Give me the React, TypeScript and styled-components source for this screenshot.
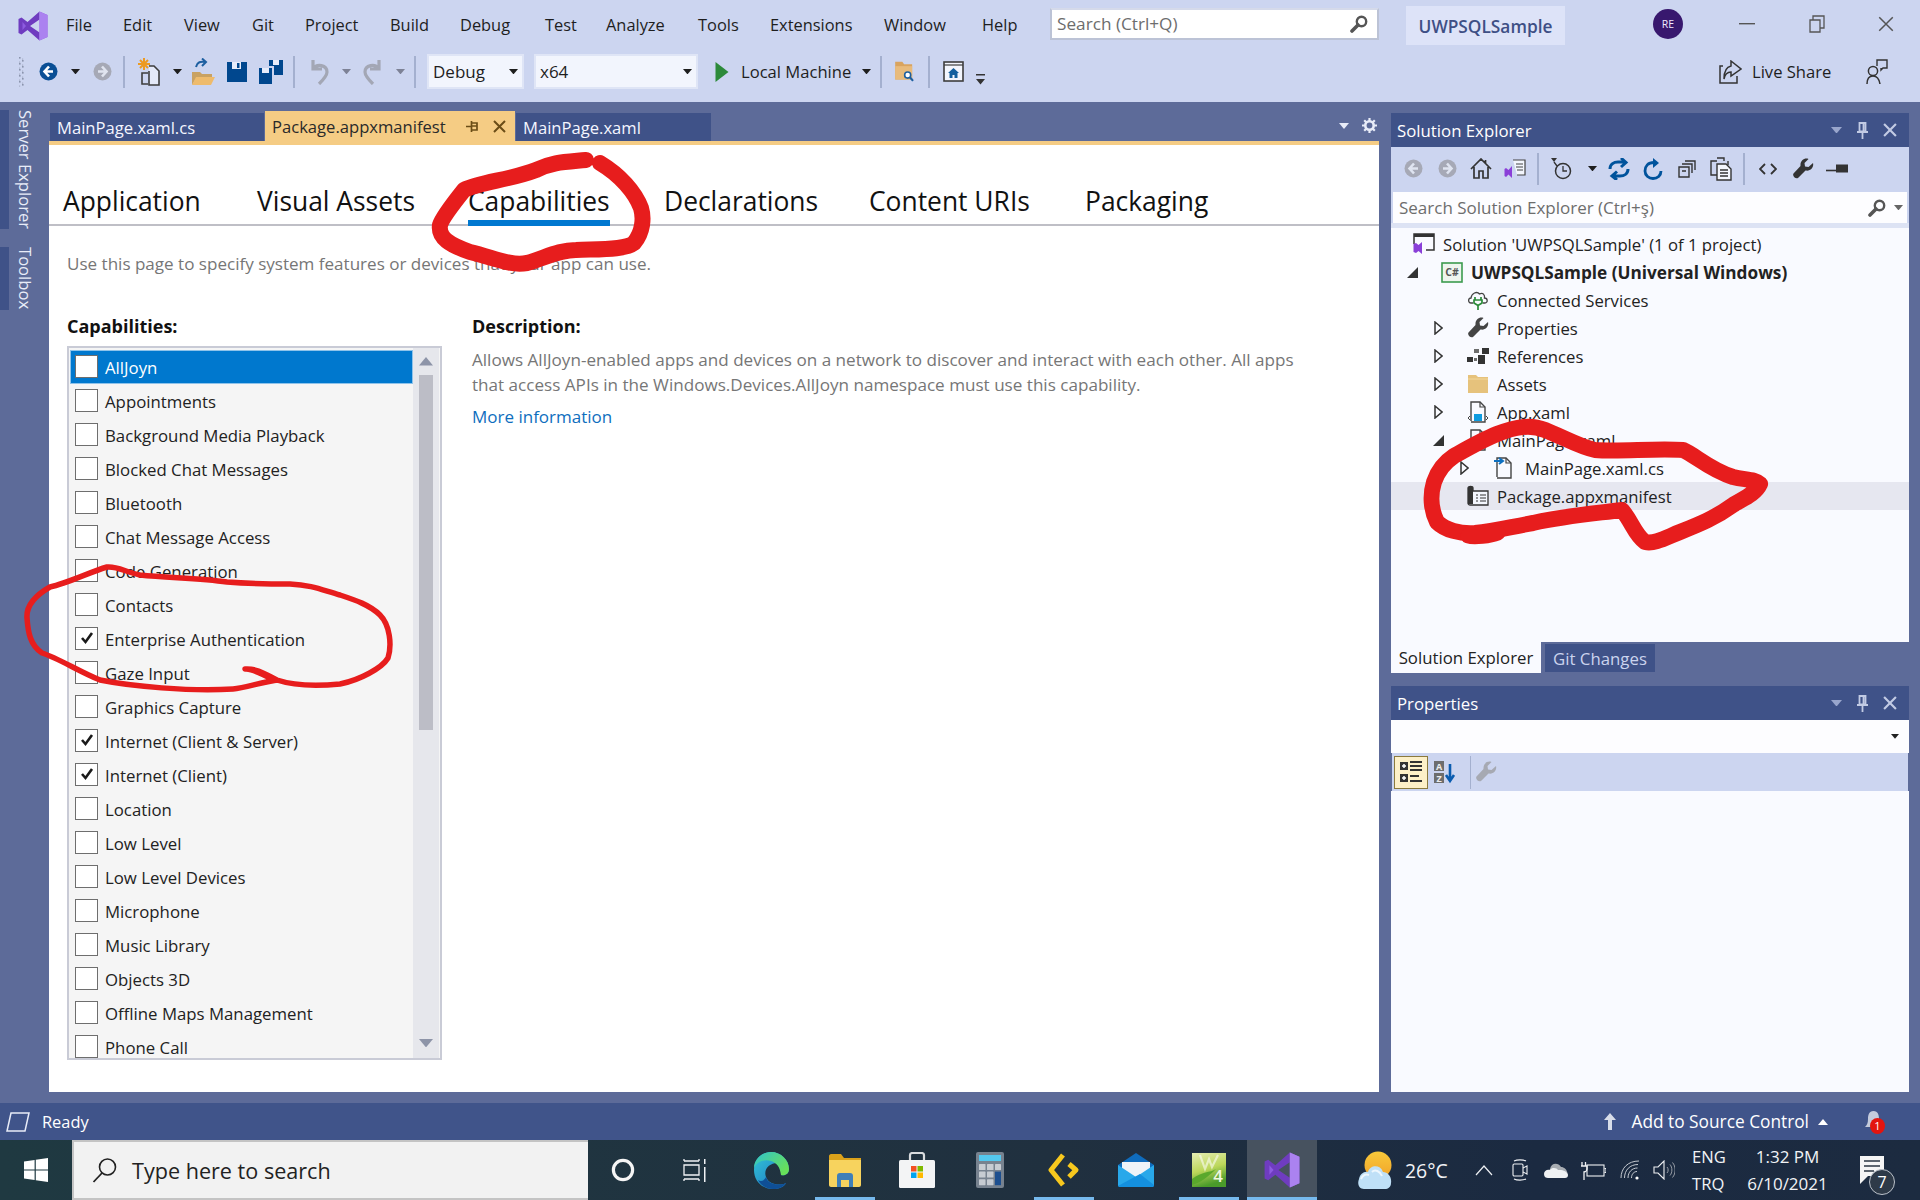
import React from 'react';
import styled, { createGlobalStyle } from 'styled-components';

const Global = createGlobalStyle`
  html, body { margin: 0; padding: 0; width: 1920px; height: 1200px; overflow: hidden; background: #5d6b99; }
  body { font-family: "Open Sans", "Noto Sans", sans-serif; }
  * { box-sizing: border-box; }
  svg { display: block; flex: none; }
`;

const Page = styled.div`
  position: relative; width: 1920px; height: 1200px; display: flex; flex-direction: column; overflow: hidden;
`;
const Chrome = styled.header`
  height: 102px; background: #ccd5f0; color: #1e1e1e; display: flex; flex-direction: column;
`;
const MenuRow = styled.div`
  height: 51px; display: flex; align-items: center; padding-left: 18px;
`;
const LogoSlot = styled.div`
  width: 48px; height: 51px; display: flex; align-items: center;
`;
const MenuItem = styled.div<{ $w: number }>`
  width: ${p => p.$w}px; font-size: 16.4px; white-space: nowrap; padding-bottom: 3px;
`;
const QuickSearch = styled.div`
  width: 329px; height: 32px; background: #fff; border: 2px solid #bcc3d6; border-top-color: #d5daea; display: flex;
  align-items: center; justify-content: space-between; padding: 0 9px 0 5px; color: #6d6d6d; font-size: 17.2px; margin-top: -4px;
`;
const ProjectBadge = styled.div`
  width: 159px; height: 39px; margin-left: 27px; margin-top: -1px; background: #dde3f8; color: #3e4f85; font-size: 17.3px; font-weight: 600;
  display: flex; align-items: center; justify-content: center; padding-top: 3px;
`;
const Avatar = styled.div`
  width: 30px; height: 30px; border-radius: 50%; background: #38186e; color: #f0eaff; font-size: 10.5px; margin-left: 88px; margin-top: -4px;
  display: flex; align-items: center; justify-content: center;
`;
const WinButton = styled.div<{ $w: number; $ml?: number }>`
  width: ${p => p.$w}px; margin-left: ${p => p.$ml ?? 0}px; display: flex; justify-content: center; margin-top: -3px;
`;
const ToolRow = styled.div`
  height: 41px; display: flex; align-items: center; padding-left: 7px;
`;
const Tool = styled.div<{ $w: number; $ml?: number }>`
  width: ${p => p.$w}px; margin-left: ${p => p.$ml ?? 0}px; height: 36px; display: flex; align-items: center; justify-content: center; flex: none;
`;
const OverflowTool = styled(Tool)`
  padding-top: 16px;
`;
const Sep = styled.div`
  width: 2px; height: 32px; background: #a4b0cf;
`;
const Combo = styled.div<{ $w: number; $ml: number }>`
  width: ${p => p.$w}px; margin-left: ${p => p.$ml}px; height: 35px; background: #f2f5fd; border: 2px solid #dfe5f6; display: flex; align-items: center;
  justify-content: space-between; padding: 0 4px 0 4px; font-size: 17px; color: #1e1e1e;
`;
const ToolLabel = styled.div<{ $w: number; $ml: number }>`
  width: ${p => p.$w}px; margin-left: ${p => p.$ml}px; font-size: 16.6px; white-space: nowrap; flex: none;
`;
const ToolEnd = styled.div`
  margin-left: auto; display: flex; align-items: center; padding-right: 32px;
`;

const Main = styled.main`
  flex: 1; display: flex; background: #5d6b99; padding-bottom: 11px; min-height: 0;
`;
const SideStrip = styled.aside`
  width: 49px; flex: none; padding-top: 8px; display: flex; flex-direction: column; gap: 18px;
`;
const VTab = styled.div<{ $h: number }>`
  height: ${p => p.$h}px; width: 41px; border-left: 9px solid #3f5288; color: #e8ecf8; writing-mode: vertical-rl; font-size: 16.6px; line-height: 32px; white-space: nowrap;
`;
const DocColumn = styled.section`
  width: 1330px; flex: none; display: flex; flex-direction: column;
`;
const DocTabs = styled.div`
  height: 39px; padding-top: 9px; display: flex; position: relative; align-items: flex-end; padding-left: 1px;
`;
const DocTab = styled.div<{ $w: number; $active?: boolean; $ml?: number }>`
  width: ${p => p.$w}px; margin-left: ${p => p.$ml ?? 0}px; height: ${p => (p.$active ? 30 : 28)}px; background: ${p => (p.$active ? '#f5cc84' : '#3f5288')};
  color: ${p => (p.$active ? '#2a2a2a' : '#f4f6ff')}; font-size: 16.6px; display: flex; align-items: center; padding-left: 7px; white-space: nowrap;
`;
const DocTabIcons = styled.div`
  display: flex; align-items: center; margin-left: 20px; gap: 14px;
`;
const DocTabTools = styled.div`
  position: absolute; right: 2px; top: 16px; display: flex; align-items: center; gap: 13px;
`;
const DocBody = styled.div`
  flex: 1; background: #fff; border-top: 4px solid #f5cc84; display: flex; flex-direction: column; min-height: 0;
`;
const PageTabs = styled.nav`
  height: 81px; flex: none; border-bottom: 2px solid #bfbfc6; display: flex; align-items: flex-end; padding-left: 14px;
`;
const PageTabSlot = styled.div<{ $w: number }>`
  width: ${p => p.$w}px; flex: none;
`;
const PageTabLabel = styled.div<{ $active?: boolean }>`
  display: inline-block; font-size: 26.4px; line-height: 34px; padding-top: 4px; padding-bottom: 2px; color: #111; white-space: nowrap;
  border-bottom: 6px solid ${p => (p.$active ? '#0078d0' : 'transparent')}; margin-bottom: -2px;
`;
const Intro = styled.p`
  margin: 26px 0 0 18px; font-size: 17.06px; line-height: 24px; color: #767676; white-space: nowrap;
`;
const Columns = styled.div`
  margin: 38px 0 0 18px; display: flex; gap: 30px; flex: 1; min-height: 0;
`;
const ListColumn = styled.div`
  width: 375px; flex: none;
`;
const Heading = styled.h3`
  margin: 0; font-size: 18px; line-height: 24px; font-weight: 700; color: #111;
`;
const ListBox = styled.div`
  margin-top: 8px; height: 714px; border: 2px solid #c9cbd6; background: #f5f5f5; display: flex; overflow: hidden;
`;
const Rows = styled.div`
  flex: 1; padding-top: 2px; overflow: hidden; min-width: 0;
`;
const Row = styled.div<{ $sel?: boolean }>`
  height: 34px; margin-left: 1px; display: flex; align-items: center; padding-left: 5px; font-size: 16.8px; white-space: nowrap;
  color: ${p => (p.$sel ? '#fff' : '#222')}; background: ${p => (p.$sel ? '#0078ce' : 'transparent')};
  box-shadow: ${p => (p.$sel ? 'inset 0 0 0 1px #8fc3ea' : 'none')};
`;
const Check = styled.div`
  width: 23px; height: 23px; flex: none; margin-right: 7px; margin-top: -2px; background: #fff;
  border: 1.5px solid #6e6e6e; display: flex; align-items: center; justify-content: center;
`;
const Scrollbar = styled.div`
  width: 26px; flex: none; margin-right: 1px; background: #e6e7ec; display: flex; flex-direction: column; align-items: center;
`;
const ScrollArrow = styled.div<{ $h: number }>`
  height: ${p => p.$h}px; flex: none; display: flex; align-items: center; justify-content: center;
`;
const ScrollThumb = styled.div`
  width: 14px; height: 355px; flex: none; background: #bcbdc6; margin-bottom: auto;
`;
const DescColumn = styled.div`
  width: 845px; flex: none;
`;
const DescText = styled.p`
  margin: 9px 0 0; font-size: 17.1px; line-height: 25px; color: #767676;
`;
const MoreLink = styled.a`
  display: block; margin-top: 8px; font-size: 17px; line-height: 24px; color: #0e6ebe;
`;

const RightColumn = styled.section`
  width: 518px; flex: none; margin-left: 12px; padding-top: 11px; display: flex; flex-direction: column;
`;
const PanelTitle = styled.div`
  height: 34px; flex: none; background: #3f5288; color: #fff; font-size: 16.8px; display: flex; align-items: center; padding: 0 12px 0 6px;
`;
const TitleText = styled.span`
  flex: 1;
`;
const TitleIcons = styled.div`
  display: flex; align-items: center; gap: 15px;
`;
const ExplorerBar = styled.div`
  height: 43px; flex: none; background: #ccd5f0; display: flex; align-items: center; padding-left: 5px;
`;
const ExplorerSearchWrap = styled.div`
  height: 38px; flex: none; background: #ccd5f0; padding: 2px 2px 5px; border-bottom: 5px solid #dde3f4;
`;
const ExplorerSearch = styled.div`
  height: 31px; background: #fdfdff; color: #6d6d6d; font-size: 17px; display: flex; align-items: center; justify-content: space-between; padding: 0 4px 0 6px;
`;
const SearchEnd = styled.div`
  display: flex; align-items: center; gap: 8px;
`;
const Tree = styled.div`
  height: 414px; flex: none; background: #f9faff; padding-top: 2px; color: #222; overflow: hidden;
`;
const TreeRow = styled.div<{ $pad: number; $hl?: boolean; $bold?: boolean }>`
  height: 28px; display: flex; align-items: center; padding-left: ${p => p.$pad}px; font-size: ${p => (p.$bold ? 17.2 : 16.7)}px; white-space: nowrap;
  background: ${p => (p.$hl ? '#e6e7f0' : 'transparent')}; font-weight: ${p => (p.$bold ? 700 : 400)};
`;
const TreeCaret = styled.div`
  width: 20px; flex: none; display: flex; justify-content: center;
`;
const TreeIcon = styled.div<{ $ml: number; $mr?: number }>`
  width: 26px; margin-left: ${p => p.$ml}px; margin-right: ${p => p.$mr ?? 6}px; flex: none; display: flex; justify-content: center;
`;
const BottomTabs = styled.div`
  height: 44px; flex: none; display: flex; align-items: flex-start; gap: 4px;
`;
const BottomTab = styled.div<{ $active?: boolean }>`
  height: ${p => (p.$active ? 31 : 28)}px; width: ${p => (p.$active ? 150 : 110)}px; margin-top: ${p => (p.$active ? 0 : 2)}px;
  background: ${p => (p.$active ? '#f9faff' : '#3f5288')}; color: ${p => (p.$active ? '#222' : '#cbd4ee')}; font-size: 16.8px;
  display: flex; align-items: center; justify-content: center;
`;
const PropCombo = styled.div`
  height: 33px; flex: none; background: #fdfdff; display: flex; align-items: center; justify-content: flex-end; padding-right: 10px;
`;
const PropBar = styled.div`
  height: 38px; flex: none; margin: 0 1px; background: #ccd5f0; display: flex; align-items: center; padding-left: 2px;
`;
const PropToggle = styled.div`
  width: 34px; height: 33px; background: #fdf0c8; border: 1.5px solid #8b7a3e; display: flex; align-items: center; justify-content: center;
`;
const PropSep = styled.div`
  width: 1px; height: 33px; background: #a4b0cf; margin-left: 8px;
`;
const PropBody = styled.div`
  flex: 1; background: #f9faff;
`;

const StatusBar = styled.footer`
  height: 37px; flex: none; background: #40548a; color: #fff; font-size: 16.4px; display: flex; align-items: center; padding-left: 6px;
`;
const StatusText = styled.span<{ $ml: number; $size?: number }>`
  margin-left: ${p => p.$ml}px; font-size: ${p => p.$size ?? 16.4}px;
`;
const StatusEnd = styled.div`
  margin-left: auto; display: flex; align-items: center; padding-right: 37px;
`;
const BellWrap = styled.div`
  position: relative; margin-left: 27px;
`;
const BellBadge = styled.div`
  position: absolute; left: 6px; top: 8px; width: 15px; height: 16px; border-radius: 50%; background: #e3140f; color: #fff; font-size: 11px;
  display: flex; align-items: center; justify-content: center;
`;

const Taskbar = styled.footer`
  height: 60px; flex: none; background: linear-gradient(90deg, #1f3941 0%, #20303f 55%, #1b2a41 80%, #1c2b40 100%); display: flex; color: #fff;
`;
const TaskSlot = styled.div<{ $w: number; $ml?: number; $active?: boolean; $run?: boolean }>`
  position: relative; width: ${p => p.$w}px; margin-left: ${p => p.$ml ?? 0}px; flex: none; display: flex; align-items: center; justify-content: center;
  background: ${p => (p.$active ? '#47525f' : 'transparent')};
  &::after {
    content: ''; position: absolute; bottom: 0; height: 3px; left: 50%; transform: translateX(-50%);
    width: ${p => (p.$active ? '100%' : '60px')}; background: ${p => (p.$run ? '#76b9ed' : 'transparent')};
  }
`;
const TaskSearch = styled.div`
  width: 516px; flex: none; background: #f2f2f2; border: 2px solid #c4c4c4; border-right: 0; color: #222; font-size: 21.6px;
  display: flex; align-items: center; gap: 14px; padding-left: 18px;
`;
const TrayText = styled.div<{ $w: number; $ml: number }>`
  width: ${p => p.$w}px; margin-left: ${p => p.$ml}px; flex: none; font-size: 19.4px; display: flex; align-items: center; color: #f1f3f6;
`;
const LangStack = styled.div`
  width: 50px; margin-left: 10px; flex: none; display: flex; flex-direction: column; justify-content: center; gap: 3px; font-size: 16.6px; line-height: 24px; color: #f1f3f6;
`;
const ClockStack = styled.div`
  width: 81px; margin-left: 5px; flex: none; display: flex; flex-direction: column; justify-content: center; align-items: center; gap: 3px; font-size: 17px; line-height: 24px; color: #f1f3f6;
`;
const NotifyBadge = styled.div`
  position: absolute; left: 41px; top: 29px; width: 26px; height: 26px; border-radius: 50%; background: #2e3a48; border: 1.5px solid #bcc2ca; color: #fff;
  font-size: 16px; display: flex; align-items: center; justify-content: center;
`;
const Annotations = styled.svg`
  position: absolute; left: 0; top: 0; width: 1920px; height: 1200px; pointer-events: none;
`;

/* ---------- icons ---------- */
const VsLogo = ({ size = 30 }: { size?: number }) => (
  <svg width={size} height={size} viewBox="0 0 30 30">
    <path d="M21.5 0.5 L21.5 8.5 L12 15 L21.5 21.5 L21.5 29.5 L9.5 19 L3.5 23.5 L0.5 22 L0.5 8 L3.5 6.5 L9.5 11 Z" fill="#6f3cc0" />
    <path d="M21.5 0.5 L29.5 4 L29.5 26 L21.5 29.5 Z M4.5 11 L4.5 19 L8 15 Z" fill="#8e5be0" fillRule="evenodd" />
    <path d="M21.5 0.5 L29.5 4 L29.5 26 L21.5 29.5 Z" fill="#ab82f0" />
  </svg>
);
const Caret = ({ c = '#1e1e1e', w = 9, dir = 'down' }: { c?: string; w?: number; dir?: 'down' | 'up' }) => (
  <svg width={w} height={w * 0.6} viewBox="0 0 10 6">
    <path d={dir === 'down' ? 'M0 0 H10 L5 6 Z' : 'M0 6 H10 L5 0 Z'} fill={c} />
  </svg>
);
const Magnifier = ({ c = '#555', s = 18 }: { c?: string; s?: number }) => (
  <svg width={s} height={s} viewBox="0 0 18 18">
    <circle cx="11.5" cy="6.5" r="4.7" fill="none" stroke={c} strokeWidth="2.4" />
    <path d="M8 10 L2 16" stroke={c} strokeWidth="3.6" strokeLinecap="round" />
  </svg>
);
const Grip = () => (
  <svg width="8" height="30" viewBox="0 0 8 30">
    {Array.from({ length: 10 }).map((_, i) => (
      <g key={i} fill="#8a94ad">
        <rect x={i % 2 ? 4 : 1} y={i * 3} width="1.6" height="1.6" />
        <rect x={i % 2 ? 1 : 4} y={i * 3 + 1.5} width="1.2" height="1.2" fill="#a7b0c7" />
      </g>
    ))}
  </svg>
);
const NavCircle = ({ back, c, a }: { back?: boolean; c: string; a: string }) => (
  <svg width="19" height="19" viewBox="0 0 19 19">
    <circle cx="9.5" cy="9.5" r="9" fill={c} />
    <path d={back ? 'M10 4.5 L5.5 9.5 L10 14.5 M6 9.5 H14' : 'M9 4.5 L13.5 9.5 L9 14.5 M13 9.5 H5'} fill="none" stroke={a} strokeWidth="2.6" />
  </svg>
);
const NewProject = () => (
  <svg width="26" height="30" viewBox="0 0 26 30">
    <path d="M12 9 H17 L22 14 V28 H12 V14" fill="#e4e9f8" stroke="#3d3d3d" strokeWidth="1.6" />
    <path d="M11 16 H5 V27 H11" fill="none" stroke="#3d3d3d" strokeWidth="1.6" />
    <path d="M7 1 V13 M1 7 H13 M3 3 L11 11 M11 3 L3 11" stroke="#ec9a22" strokeWidth="2" />
  </svg>
);
const OpenFolder = () => (
  <svg width="26" height="28" viewBox="0 0 26 28">
    <path d="M2 14 H10 L12 16 H22 V19 H7 L2 27 Z" fill="#c9a262" />
    <path d="M6 19 H25 L21 27 H2 Z" fill="#eebb6c" />
    <path d="M6 9 C7 4 11 3 15 4 M12 0.5 L16 4 L12 8" fill="none" stroke="#1d5fa0" strokeWidth="2" />
  </svg>
);
const Floppy = ({ s = 22 }: { s?: number }) => (
  <svg width={s} height={s} viewBox="0 0 22 22">
    <path d="M1 1 H21 V21 H1 Z" fill="#00478e" />
    <rect x="6" y="1" width="9" height="7" fill="#e6ecfa" />
    <rect x="11" y="2" width="2.5" height="5" fill="#00478e" />
  </svg>
);
const SaveAll = () => (
  <svg width="24" height="25" viewBox="0 0 24 25">
    <path d="M0 9 H13 V25 H0 Z" fill="#00478e" />
    <rect x="3" y="9" width="7" height="5" fill="#e6ecfa" />
    <path d="M10 1 H24 V16 H15 V7 H10 Z" fill="#00478e" />
    <rect x="14" y="1" width="6" height="5" fill="#e6ecfa" />
  </svg>
);
const Undo = ({ flip }: { flip?: boolean }) => (
  <svg width="22" height="26" viewBox="0 0 22 26">
    <g transform={flip ? 'translate(22,0) scale(-1,1)' : undefined}>
      <path d="M5 1 V10 H14 M5 10 C9 4 19 6 19 13 C19 17 15 21 11 25" fill="none" stroke="#a3a7b5" strokeWidth="3.2" />
    </g>
  </svg>
);
const Play = () => (
  <svg width="14" height="20" viewBox="0 0 14 20"><path d="M0.5 0 L13.5 10 L0.5 20 Z" fill="#2c8a3a" /></svg>
);
const FolderSearch = () => (
  <svg width="22" height="25" viewBox="0 0 24 28">
    <path d="M1 3 H9 L11 6 H20 V23 H1 Z" fill="#d9a45f" />
    <path d="M1 8 H20 V23 H1 Z" fill="#e8bb7c" />
    <circle cx="15" cy="18" r="3.4" fill="#fff" stroke="#1d5fa0" strokeWidth="1.8" />
    <path d="M17.5 20.5 L21 24.5" stroke="#1d5fa0" strokeWidth="2.4" />
  </svg>
);
const HomeWin = () => (
  <svg width="21" height="21" viewBox="0 0 21 21">
    <rect x="1" y="1" width="19" height="19" fill="#f3f6fd" stroke="#3d3d3d" strokeWidth="1.6" />
    <path d="M1 4 H20" stroke="#3d3d3d" strokeWidth="1.2" />
    <path d="M5 12 L10.5 7 L16 12 H14.5 V17 H11.5 V14 H9.5 V17 H6.5 V12 Z" fill="#14609e" />
  </svg>
);
const Overflow = () => (
  <svg width="9" height="11" viewBox="0 0 9 11"><path d="M0 0 H9 V1.5 H0 Z M0 5 H9 L4.5 10.5 Z" fill="#333" /></svg>
);
const LiveShare = () => (
  <svg width="23" height="24" viewBox="0 0 23 24">
    <path d="M4 6 H1 V23 H18 V16" fill="none" stroke="#333" strokeWidth="1.5" />
    <path d="M12 1 L22 9 L12 16 V12 C9 12 6 14 5 19 C5 12 7 7 12 6 Z" fill="none" stroke="#333" strokeWidth="1.5" />
  </svg>
);
const Feedback = () => (
  <svg width="22" height="26" viewBox="0 0 22 26">
    <circle cx="7" cy="12" r="4.6" fill="none" stroke="#333" strokeWidth="1.5" />
    <path d="M1 25 C1 19 4 17 7 17 C10 17 13 19 14 25" fill="none" stroke="#333" strokeWidth="1.5" />
    <path d="M11 7 V1 H21 V9 H17 L15 11 V9" fill="none" stroke="#333" strokeWidth="1.4" />
  </svg>
);
const Pin = ({ c }: { c: string }) => (
  <svg width="11" height="17" viewBox="0 0 11 17">
    <path d="M2.5 1 H8.5 V9.5 H2.5 Z M0 10 H11 M5.5 10 V17 M6.5 1 V9" fill="none" stroke={c} strokeWidth="1.8" />
  </svg>
);
const SmallPin = () => (
  <svg width="13" height="11" viewBox="0 0 13 11"><path d="M0 5.5 H5 M5.5 0 V11 M5.5 2 H11 V9 H5.5 M6 5 H11" fill="none" stroke="#6b4d16" strokeWidth="1.7" /></svg>
);
const XMark = ({ c, s = 13, w = 1.8 }: { c: string; s?: number; w?: number }) => (
  <svg width={s} height={s} viewBox="0 0 13 13"><path d="M1 1 L12 12 M12 1 L1 12" stroke={c} strokeWidth={w} /></svg>
);
const Gear = () => (
  <svg width="15" height="15" viewBox="0 0 15 15">
    <circle cx="7.5" cy="7.5" r="4.2" fill="none" stroke="#e8ecf8" strokeWidth="2.6" />
    <path d="M7.5 0 V3 M7.5 12 V15 M0 7.5 H3 M12 7.5 H15 M2.2 2.2 L4.2 4.2 M10.8 10.8 L12.8 12.8 M2.2 12.8 L4.2 10.8 M10.8 4.2 L12.8 2.2" stroke="#e8ecf8" strokeWidth="2.2" />
  </svg>
);
const TreeOpen = () => (
  <svg width="11" height="11" viewBox="0 0 11 11"><path d="M11 0 V11 H0 Z" fill="#333" /></svg>
);
const TreeClosed = () => (
  <svg width="9" height="14" viewBox="0 0 9 14"><path d="M1 1 L8 7 L1 13 Z" fill="none" stroke="#333" strokeWidth="1.5" /></svg>
);
const Wrench = ({ c, s = 22 }: { c: string; s?: number }) => (
  <svg width={s} height={s} viewBox="0 0 22 22">
    <path d="M21 5 L16.5 9 L13 8.5 L12.5 5 L16.5 1 C12.5 -0.5 8 2.5 8.5 8 L1.5 15.5 C0 17.5 3.5 21.5 6 20 L13.5 12.5 C19 13.5 22 9 21 5 Z" fill={c} />
  </svg>
);
const HomeIcon = () => (
  <svg width="22" height="21" viewBox="0 0 22 21">
    <path d="M1 11 L11 1 L21 11 M4 9 V20 H9 V13 H13 V20 H18 V9 M15.5 2 V5" fill="none" stroke="#333" strokeWidth="1.7" />
  </svg>
);
const VsDoc = () => (
  <svg width="22" height="20" viewBox="0 0 22 20">
    <path d="M9 1 H21 V16 H13" fill="#f3f6fd" stroke="#444" strokeWidth="1.2" />
    <path d="M12 5 H19 M12 8 H19 M13 11 H19" stroke="#444" strokeWidth="1.2" />
    <path d="M8 7 V19 L4.5 15.5 L2 18 L0.5 17 V10 L2 9 L4.5 11 Z" fill="#8a3fd8" />
  </svg>
);
const Clock = () => (
  <svg width="24" height="22" viewBox="0 0 24 22">
    <path d="M0 0 H6 L3 4 Z" fill="#333" />
    <circle cx="12" cy="13" r="7.5" fill="none" stroke="#333" strokeWidth="1.5" />
    <path d="M12 8 V13 H16 M3 4 L6 8" fill="none" stroke="#333" strokeWidth="1.3" />
  </svg>
);
const Sync = () => (
  <svg width="22" height="22" viewBox="0 0 22 22">
    <path d="M2 11 C2 6 6 4 10 4 H16 M13 0 L18 4.5 L13 9 M20 11 C20 16 16 18 12 18 H6 M9 13.5 L4 18 L9 22" fill="none" stroke="#00539c" strokeWidth="3" />
  </svg>
);
const Refresh = () => (
  <svg width="20" height="22" viewBox="0 0 20 22">
    <path d="M11 4.5 C5 4.5 2 8 2 13 C2 17.5 6 20.5 10 20.5 C14.5 20.5 18 17.5 18 13" fill="none" stroke="#00539c" strokeWidth="2.8" />
    <path d="M10 0 L16 5 L10 10 Z" fill="#00539c" />
  </svg>
);
const Collapse = () => (
  <svg width="18" height="18" viewBox="0 0 18 18">
    <path d="M1 7 H11 V17 H1 Z M4 11 H8 M4 4 H14 V13 M7 1 H17 V10" fill="none" stroke="#333" strokeWidth="1.4" />
  </svg>
);
const ClipDoc = () => (
  <svg width="22" height="24" viewBox="0 0 22 24">
    <path d="M7 4 H1 V18 H7 M7 1 H14 L14 4 M18 4 V8" fill="none" stroke="#333" strokeWidth="1.4" />
    <path d="M7 7 H16 L21 12 V23 H7 Z M10 13 H18 M10 16 H18 M10 19 H18" fill="#f3f6fd" stroke="#333" strokeWidth="1.4" />
  </svg>
);
const CodeBr = () => (
  <svg width="18" height="12" viewBox="0 0 18 12"><path d="M6 1 L1 6 L6 11 M12 1 L17 6 L12 11" fill="none" stroke="#333" strokeWidth="1.8" /></svg>
);
const DashPin = () => (
  <svg width="22" height="9" viewBox="0 0 22 9"><path d="M0 6.5 H10" stroke="#333" strokeWidth="1.6" /><rect x="10" y="0.5" width="12" height="8" fill="#333" /></svg>
);
const SolutionIcon = () => (
  <svg width="22" height="22" viewBox="0 0 22 22">
    <path d="M1 11 V1 H21 V17 H13" fill="none" stroke="#333" strokeWidth="1.5" />
    <path d="M1 1 H21 V4 H1 Z" fill="#333" />
    <path d="M9 9 V21 L5.5 18 L3 20 L0.5 19 V11 L3 10 L5.5 12 Z" fill="#8a3fd8" />
  </svg>
);
const CsProject = () => (
  <svg width="22" height="21" viewBox="0 0 22 21">
    <rect x="1" y="1" width="20" height="19" fill="#eef5ee" stroke="#3d9b4f" strokeWidth="1.6" />
    <text x="11" y="14" fontSize="10.5" fontWeight="700" textAnchor="middle" fontFamily="Open Sans" fill="#555">C#</text>
  </svg>
);
const CloudPlug = () => (
  <svg width="22" height="20" viewBox="0 0 22 20">
    <path d="M6 13 H4 C1 13 0.7 8 4 8 C4.5 3 10 1 12.5 4 C16 2 18 5 17.5 8 C21 8 21 13 18 13 H16" fill="none" stroke="#444" strokeWidth="1.3" />
    <path d="M8 7 V10 M14 7 V10 M7 10 H15 V13 L11 15.5 L7 13 Z M11 15 V20" fill="none" stroke="#2c8a3a" strokeWidth="1.7" />
  </svg>
);
const RefsIcon = () => (
  <svg width="22" height="17" viewBox="0 0 22 17">
    <g fill="#333"><rect x="0" y="9" width="6" height="5" /><rect x="11" y="7" width="7" height="9" /><rect x="15" y="0" width="7" height="6" /></g>
    <g fill="#6c6c6c"><rect x="7" y="1" width="5" height="4" /><rect x="7" y="10" width="3" height="3" /></g>
  </svg>
);
const TreeFolder = () => (
  <svg width="20" height="18" viewBox="0 0 20 18"><path d="M0 0 H8 L10 2 H20 V18 H0 Z" fill="#e6c27c" /><path d="M0 4 H20" stroke="#f3d79b" strokeWidth="1" /></svg>
);
const FileOutline = ({ children }: { children?: React.ReactNode }) => (
  <svg width="20" height="22" viewBox="0 0 20 22">
    <path d="M3 20 V1 H12 L17 6 V21 H3" fill="#f9faff" stroke="#444" strokeWidth="1.4" />
    <path d="M12 1 V6 H17" fill="none" stroke="#444" strokeWidth="1.2" />
    {children}
  </svg>
);
const ManifestIcon = () => (
  <svg width="22" height="22" viewBox="0 0 22 22">
    <path d="M1 18 V3 C1 1 6 1 6 3 V6 H21 V20 H3 C1 20 1 18 1 18 Z" fill="#f3f6fd" stroke="#333" strokeWidth="1.3" />
    <path d="M1 18 V3 C1 1 6 1 6 3 V19 H1 Z" fill="#333" />
    <path d="M9 10 H11 M13 10 H19 M9 13 H11 M13 13 H19 M9 16 H11 M13 16 H19" stroke="#333" strokeWidth="1" />
  </svg>
);
const CheckMark = () => (
  <svg width="14" height="14" viewBox="0 0 14 14"><path d="M2 7 L5.5 11 L12 2" fill="none" stroke="#1a1a1a" strokeWidth="2.6" /></svg>
);
const CategorizedIcon = () => (
  <svg width="24" height="24" viewBox="0 0 24 24">
    <g fill="#333">
      <rect x="1" y="2" width="8" height="8" /><rect x="1" y="14" width="8" height="8" />
      <rect x="11" y="1" width="12" height="2" /><rect x="11" y="5" width="12" height="2" /><rect x="11" y="9" width="12" height="2" />
      <rect x="11" y="15" width="9" height="2" /><rect x="11" y="20" width="12" height="2" />
    </g>
    <path d="M3 6 H7 M5 4 V8 M3 18 H7 M5 16 V20" stroke="#fff" strokeWidth="1.5" />
  </svg>
);
const AzIcon = () => (
  <svg width="24" height="24" viewBox="0 0 24 24">
    <rect x="1" y="1" width="10" height="10" fill="#6d6d6d" />
    <rect x="1" y="13" width="10" height="10" fill="#6d6d6d" />
    <text x="6" y="9.5" fontSize="9" fontWeight="700" textAnchor="middle" fontFamily="Open Sans" fill="#eee">A</text>
    <text x="6" y="21.5" fontSize="9" fontWeight="700" textAnchor="middle" fontFamily="Open Sans" fill="#eee">Z</text>
    <path d="M17 4 V20 M13 15 L17 21 L21 15" fill="none" stroke="#0a5cb0" strokeWidth="2.6" />
  </svg>
);
const ReadyIcon = () => (
  <svg width="24" height="20" viewBox="0 0 24 20"><path d="M5 1 H23 L19 19 H1 Z" fill="none" stroke="#e8ecf8" strokeWidth="1.5" /></svg>
);
const UpArrow = () => (
  <svg width="12" height="17" viewBox="0 0 12 17"><path d="M6 0 L12 7 H8 V17 H4 V7 H0 Z" fill="#d8dde9" /></svg>
);
const Bell = () => (
  <svg width="19" height="24" viewBox="0 0 19 24">
    <path d="M9.5 1 C5 1 4 5 4 9 C4 13 3 15 1 17 H18 C16 15 15 13 15 9 C15 5 14 1 9.5 1 Z M7 19 H12 L9.5 22 Z" fill="#c4cbdc" />
  </svg>
);
const WinLogo = () => (
  <svg width="24" height="24" viewBox="0 0 24 24">
    <path d="M0 3.4 L10.6 2 V11.4 H0 Z M11.8 1.8 L24 0 V11.4 H11.8 Z M0 12.6 H10.6 V22 L0 20.6 Z M11.8 12.6 H24 V24 L11.8 22.2 Z" fill="#fff" />
  </svg>
);
const TaskMagnifier = () => (
  <svg width="26" height="26" viewBox="0 0 26 26">
    <circle cx="15.5" cy="10" r="8" fill="none" stroke="#222" strokeWidth="1.6" />
    <path d="M10 16 L1.5 25" stroke="#222" strokeWidth="1.8" />
  </svg>
);
const Cortana = () => (
  <svg width="24" height="24" viewBox="0 0 24 24"><circle cx="12" cy="12" r="9.6" fill="none" stroke="#f5f5f5" strokeWidth="3.2" /></svg>
);
const TaskView = () => (
  <svg width="24" height="24" viewBox="0 0 24 24">
    <g fill="none" stroke="#f0f2f5" strokeWidth="1.3">
      <path d="M1 7 H16 V17 H1 Z M1 3 H16 M1 1 V3 M16 1 V3 M1 21 H16 M1 21 V23 M16 21 V23" />
    </g>
    <g fill="#f0f2f5"><rect x="21" y="1" width="1.5" height="5" /><rect x="21" y="9" width="1.5" height="15" /></g>
  </svg>
);
const Edge = () => (
  <svg width="36" height="37" viewBox="0 0 36 37">
    <defs>
      <linearGradient id="edgeA" x1="0" y1="0" x2="1" y2="1"><stop offset="0" stopColor="#33c6d6" /><stop offset="1" stopColor="#1b6fc2" /></linearGradient>
      <linearGradient id="edgeB" x1="0" y1="0" x2="1" y2="0.6"><stop offset="0" stopColor="#2fc3d0" /><stop offset="1" stopColor="#68e05a" /></linearGradient>
    </defs>
    <path d="M18 0 C9 0 1 7 1 18 C1 29 9 37 20 37 C26 37 31 35 33 31 C27 34 16 33 13 25 C10 17 17 11 24 11 C28 11 31 14 31 18 C31 20 29 22 28 23 C32 24 36 22 36 17 C36 8 28 0 18 0 Z" fill="url(#edgeA)" />
    <path d="M18 0 C9 0 1 7 1 16 C4 9 12 7 18 9 C24 11 27 15 28 23 C32 24 36 22 36 17 C36 8 28 0 18 0 Z" fill="url(#edgeB)" />
    <path d="M13 25 C15 33 27 34 33 31 C30 35 26 37 20 37 C14 37 8 34 5 28 C8 30 11 29 13 25 Z" fill="#0f4f96" />
  </svg>
);
const TaskFolder = () => (
  <svg width="32" height="33" viewBox="0 0 32 33">
    <path d="M0 2 C0 1 1 0 2 0 H12 L15 4 H32 V10 H0 Z" fill="#dba21b" />
    <path d="M0 6 H32 V31 C32 32 31 33 30 33 H2 C1 33 0 32 0 31 Z" fill="#f7d35e" />
    <path d="M8 33 V22 C8 20 9 19 11 19 H21 C23 19 24 20 24 22 V33 H20 V26 H12 V33 Z" fill="#3f7fb8" />
  </svg>
);
const TaskStore = () => (
  <svg width="36" height="36" viewBox="0 0 36 36">
    <path d="M11 10 V3 C11 1.5 12 1 13.5 1 H22.5 C24 1 25 1.5 25 3 V10" fill="none" stroke="#d9dcdf" strokeWidth="2.2" />
    <rect x="0" y="8" width="36" height="28" rx="1.5" fill="#f3f4f5" />
    <rect x="12" y="14" width="5.5" height="5.5" fill="#f25022" /><rect x="18.5" y="14" width="5.5" height="5.5" fill="#7fba00" />
    <rect x="12" y="20.5" width="5.5" height="5.5" fill="#00a4ef" /><rect x="18.5" y="20.5" width="5.5" height="5.5" fill="#ffb900" />
  </svg>
);
const Calc = () => (
  <svg width="28" height="36" viewBox="0 0 28 36">
    <rect width="28" height="36" rx="2" fill="#77828f" />
    <rect x="3" y="3" width="22" height="6" fill="#54c8ef" />
    {[0, 1, 2].map(r => [0, 1].map(c => <rect key={`${r}${c}`} x={3 + c * 8} y={12 + r * 7.6} width="6.5" height="6" rx="0.6" fill="#c7ccd2" />))}
    <rect x="19" y="12" width="6" height="6" rx="0.6" fill="#c7ccd2" />
    <rect x="19" y="19.6" width="6" height="13.6" fill="#1d4f8f" />
  </svg>
);
const CodeYellow = () => (
  <svg width="32" height="36" viewBox="0 0 32 36">
    <path d="M15 3 L3 18 L15 33" fill="none" stroke="#f7c81e" strokeWidth="5" strokeLinejoin="round" />
    <path d="M21 12 L28 18 L21 25" fill="none" stroke="#f7c81e" strokeWidth="5" strokeLinejoin="round" />
  </svg>
);
const MailIcon = () => (
  <svg width="36" height="34" viewBox="0 0 36 34">
    <path d="M18 0 L36 12 V32 C36 33 35 34 34 34 H2 C1 34 0 33 0 32 V12 Z" fill="#0f6cbd" />
    <path d="M4 9 H32 V17 L18 25 L4 17 Z" fill="#eef3f8" />
    <path d="M0 12 L18 24 L36 12 V32 C36 33 35 34 34 34 H2 C1 34 0 33 0 32 Z" fill="#28a8ea" />
    <path d="M0 33 L22 21 L36 32 C36 33 35 34 34 34 H2 Z" fill="#1490df" />
  </svg>
);
const GreenApp = () => (
  <svg width="34" height="34" viewBox="0 0 34 34">
    <defs><linearGradient id="gr" x1="0" y1="0" x2="0.3" y2="1"><stop offset="0" stopColor="#e6edb4" /><stop offset="0.55" stopColor="#bcd75a" /><stop offset="1" stopColor="#4a9b2a" /></linearGradient></defs>
    <rect width="34" height="34" fill="url(#gr)" />
    <path d="M8 2 L13 16 L17 6 L20 14 L26 2" fill="none" stroke="#fff" strokeOpacity="0.55" strokeWidth="2.2" />
    <path d="M0 26 C10 18 18 20 24 16 C16 24 8 30 0 32 Z" fill="#5aa82c" />
    <text x="26" y="29" fontSize="17" fontWeight="600" textAnchor="middle" fontFamily="Open Sans" fill="#f2f7e2">4</text>
  </svg>
);
const WeatherIcon = () => (
  <svg width="34" height="38" viewBox="0 0 34 38">
    <defs><linearGradient id="sun" x1="0" y1="0" x2="0" y2="1"><stop offset="0" stopColor="#f8c93a" /><stop offset="1" stopColor="#f1a22a" /></linearGradient></defs>
    <circle cx="20" cy="14" r="13.5" fill="url(#sun)" />
    <path d="M6 38 C1 38 -1 33 1 28 C2 23 6 20 10 21 C12 14 22 13 25 21 C30 21 34 26 33 32 C33 36 30 38 27 38 Z" fill="#bfe0f7" />
    <path d="M3 28 C5 24 8 23 11 24 M14 21 C17 18 22 20 24 25" fill="none" stroke="#eef7fd" strokeWidth="2" />
  </svg>
);
const TrayUp = () => (
  <svg width="18" height="11" viewBox="0 0 18 11"><path d="M1 10 L9 1 L17 10" fill="none" stroke="#eef0f3" strokeWidth="1.2" /></svg>
);
const TrayCam = () => (
  <svg width="16" height="22" viewBox="0 0 16 22">
    <g fill="none" stroke="#eef0f3" strokeWidth="1.1">
      <path d="M2 2 C5 0.5 11 0.5 14 2 M2 20 C5 21.5 11 21.5 14 20" />
      <rect x="1" y="5" width="10" height="12" rx="1.2" />
      <path d="M11 9 L15 7 V15 L11 13" />
    </g>
  </svg>
);
const TrayCloud = () => (
  <svg width="24" height="16" viewBox="0 0 24 16">
    <path d="M6 7 C7 1 14 0 17 5 C20 5 23 7 24 13 L4 12 Z" fill="#a8adb3" />
    <path d="M0 12 C0 9 3 7 6 8 C8 5 13 6 14 8 C18 8 22 8 24 13 C24 15 23 16 21 16 H4 C2 16 0 15 0 12 Z" fill="#eff1f3" />
  </svg>
);
const TrayPower = () => (
  <svg width="25" height="20" viewBox="0 0 25 20">
    <g fill="none" stroke="#eef0f3" strokeWidth="1.1">
      <rect x="6" y="5" width="17" height="11" />
      <path d="M23.5 8.5 H25 V12.5 H23.5" />
      <path d="M1 2 V6 M4.5 2 V6 M0 6 H6 V9 C6 11 4 12 3 12 V20" strokeWidth="1.3" />
    </g>
  </svg>
);
const TrayWifi = () => (
  <svg width="20" height="20" viewBox="0 0 20 20">
    <g fill="none" stroke="#c4c9d0" strokeWidth="1">
      <path d="M1 18 C1 8 8 1 19 1" /><path d="M4.5 18 C4.5 10 10 4.5 18 4.5" /><path d="M8 18 C8 12 12 8 17.5 8" /><path d="M11.5 18 C11.5 14 14 11.5 17 11.5" />
    </g>
    <circle cx="17" cy="18" r="1.6" fill="#fff" />
  </svg>
);
const TrayVolume = () => (
  <svg width="22" height="20" viewBox="0 0 22 20">
    <path d="M1 7 H5 L11 1 V19 L5 13 H1 Z" fill="none" stroke="#eef0f3" strokeWidth="1.1" />
    <path d="M14 7 C15.5 8.5 15.5 11.5 14 13 M17 4.5 C19.5 7.5 19.5 12.5 17 15.5 M19.5 2.5 C23 6.5 23 13.5 19.5 17.5" fill="none" stroke="#a8adb3" strokeWidth="0.9" />
  </svg>
);
const NotifyIcon = () => (
  <svg width="24" height="28" viewBox="0 0 24 28">
    <path d="M0 0 H24 V20 H8 L0 28 Z" fill="#f5f5f5" />
    <path d="M4 5 H20 M4 10 H20 M4 15 H14" stroke="#2a3442" strokeWidth="1.6" />
  </svg>
);

const CAPS: [string, boolean?][] = [
  ['AllJoyn'], ['Appointments'], ['Background Media Playback'], ['Blocked Chat Messages'], ['Bluetooth'],
  ['Chat Message Access'], ['Code Generation'], ['Contacts'], ['Enterprise Authentication', true], ['Gaze Input'],
  ['Graphics Capture'], ['Internet (Client & Server)', true], ['Internet (Client)', true], ['Location'], ['Low Level'],
  ['Low Level Devices'], ['Microphone'], ['Music Library'], ['Objects 3D'], ['Offline Maps Management'], ['Phone Call'],
];
const MENU: [string, number][] = [
  ['File', 57], ['Edit', 61], ['View', 68], ['Git', 53], ['Project', 85], ['Build', 70], ['Debug', 85], ['Test', 61],
  ['Analyze', 92], ['Tools', 72], ['Extensions', 114], ['Window', 98], ['Help', 68],
];
const PAGE_TABS: [string, number][] = [
  ['Application', 194], ['Visual Assets', 211], ['Capabilities', 196], ['Declarations', 205], ['Content URIs', 216], ['Packaging', 200],
];

const RED = '#e71d1d';

export default function App() {
  return (
    <Page>
      <Global />
      <Chrome>
        <MenuRow>
          <LogoSlot><VsLogo /></LogoSlot>
          {MENU.map(([m, w]) => <MenuItem key={m} $w={w}>{m}</MenuItem>)}
          <QuickSearch>Search (Ctrl+Q)<Magnifier /></QuickSearch>
          <ProjectBadge>UWPSQLSample</ProjectBadge>
          <Avatar>RE</Avatar>
          <WinButton $w={70} $ml={29}>
            <svg width="16" height="2" viewBox="0 0 16 2"><rect width="16" height="1.4" fill="#555" /></svg>
          </WinButton>
          <WinButton $w={70}>
            <svg width="16" height="18" viewBox="0 0 16 18"><path d="M1 5 H11 V17 H1 Z M4 5 V1 H15 V13 H11" fill="none" stroke="#555" strokeWidth="1.3" /></svg>
          </WinButton>
          <WinButton $w={68}><XMark c="#555" s={16} w={1.2} /></WinButton>
        </MenuRow>
        <ToolRow>
          <Tool $w={30}><Grip /></Tool>
          <Tool $w={22}><NavCircle back c="#0a4f95" a="#fff" /></Tool>
          <Tool $w={32}><Caret /></Tool>
          <Tool $w={22}><NavCircle c="#a6a9b6" a="#e0e4ef" /></Tool>
          <Tool $w={22}><Sep /></Tool>
          <Tool $w={30}><NewProject /></Tool>
          <Tool $w={24}><Caret /></Tool>
          <Tool $w={28}><OpenFolder /></Tool>
          <Tool $w={40}><Floppy /></Tool>
          <Tool $w={28}><SaveAll /></Tool>
          <Tool $w={18}><Sep /></Tool>
          <Tool $w={32}><Undo /></Tool>
          <Tool $w={22}><Caret c="#7d8296" /></Tool>
          <Tool $w={32}><Undo flip /></Tool>
          <Tool $w={22}><Caret c="#7d8296" /></Tool>
          <Tool $w={7}><Sep /></Tool>
          <Combo $w={97} $ml={9}>Debug<Caret /></Combo>
          <Combo $w={164} $ml={10}>x64<Caret /></Combo>
          <Tool $w={20} $ml={14}><Play /></Tool>
          <ToolLabel $w={113} $ml={9}>Local Machine</ToolLabel>
          <Tool $w={24}><Caret /></Tool>
          <Tool $w={6}><Sep /></Tool>
          <Tool $w={42}><FolderSearch /></Tool>
          <Tool $w={5}><Sep /></Tool>
          <Tool $w={44}><HomeWin /></Tool>
          <OverflowTool $w={10}><Overflow /></OverflowTool>
          <ToolEnd>
            <LiveShare />
            <ToolLabel $w={78} $ml={10}>Live Share</ToolLabel>
            <Tool $w={22} $ml={36}><Feedback /></Tool>
          </ToolEnd>
        </ToolRow>
      </Chrome>
      <Main>
        <SideStrip>
          <VTab $h={119}>Server Explorer</VTab>
          <VTab $h={63}>Toolbox</VTab>
        </SideStrip>
        <DocColumn>
          <DocTabs>
            <DocTab $w={214}>MainPage.xaml.cs</DocTab>
            <DocTab $w={250} $ml={1} $active>
              Package.appxmanifest
              <DocTabIcons><SmallPin /><XMark c="#6b4d16" s={13} w={2} /></DocTabIcons>
            </DocTab>
            <DocTab $w={195} $ml={1}>MainPage.xaml</DocTab>
            <DocTabTools><Caret c="#e8ecf8" w={10} /><Gear /></DocTabTools>
          </DocTabs>
          <DocBody>
            <PageTabs>
              {PAGE_TABS.map(([t, w]) => (
                <PageTabSlot key={t} $w={w}><PageTabLabel $active={t === 'Capabilities'}>{t}</PageTabLabel></PageTabSlot>
              ))}
            </PageTabs>
            <Intro>Use this page to specify system features or devices that your app can use.</Intro>
            <Columns>
              <ListColumn>
                <Heading>Capabilities:</Heading>
                <ListBox>
                  <Rows>
                    {CAPS.map(([c, on], i) => (
                      <Row key={c} $sel={i === 0}>
                        <Check>{on && <CheckMark />}</Check>{c}
                      </Row>
                    ))}
                  </Rows>
                  <Scrollbar>
                    <ScrollArrow $h={27}><Caret c="#8d94a8" w={14} dir="up" /></ScrollArrow>
                    <ScrollThumb />
                    <ScrollArrow $h={30}><Caret c="#8d94a8" w={14} /></ScrollArrow>
                  </Scrollbar>
                </ListBox>
              </ListColumn>
              <DescColumn>
                <Heading>Description:</Heading>
                <DescText>Allows AllJoyn-enabled apps and devices on a network to discover and interact with each other. All apps that access APIs in the Windows.Devices.AllJoyn namespace must use this capability.</DescText>
                <MoreLink>More information</MoreLink>
              </DescColumn>
            </Columns>
          </DocBody>
        </DocColumn>
        <RightColumn>
          <PanelTitle>
            <TitleText>Solution Explorer</TitleText>
            <TitleIcons><Caret c="#99a6cc" w={11} /><Pin c="#c2cbe4" /><XMark c="#c2cbe4" s={14} w={2} /></TitleIcons>
          </PanelTitle>
          <ExplorerBar>
            <Tool $w={34}><NavCircle back c="#a6a9b6" a="#dfe4f0" /></Tool>
            <Tool $w={34}><NavCircle c="#a6a9b6" a="#dfe4f0" /></Tool>
            <Tool $w={34}><HomeIcon /></Tool>
            <Tool $w={34}><VsDoc /></Tool>
            <Tool $w={12}><Sep /></Tool>
            <Tool $w={38}><Clock /></Tool>
            <Tool $w={20}><Caret /></Tool>
            <Tool $w={34}><Sync /></Tool>
            <Tool $w={34}><Refresh /></Tool>
            <Tool $w={34}><Collapse /></Tool>
            <Tool $w={34}><ClipDoc /></Tool>
            <Tool $w={12}><Sep /></Tool>
            <Tool $w={36}><CodeBr /></Tool>
            <Tool $w={34}><Wrench c="#333" /></Tool>
            <Tool $w={34}><DashPin /></Tool>
          </ExplorerBar>
          <ExplorerSearchWrap>
            <ExplorerSearch>
              Search Solution Explorer (Ctrl+ş)
              <SearchEnd><Magnifier /><Caret c="#666" w={9} /></SearchEnd>
            </ExplorerSearch>
          </ExplorerSearchWrap>
          <Tree>
            <TreeRow $pad={20}><TreeIcon $ml={0}><SolutionIcon /></TreeIcon>Solution 'UWPSQLSample' (1 of 1 project)</TreeRow>
            <TreeRow $pad={11} $bold><TreeCaret><TreeOpen /></TreeCaret><TreeIcon $ml={17}><CsProject /></TreeIcon>UWPSQLSample (Universal Windows)</TreeRow>
            <TreeRow $pad={37}><TreeCaret /><TreeIcon $ml={17}><CloudPlug /></TreeIcon>Connected Services</TreeRow>
            <TreeRow $pad={37}><TreeCaret><TreeClosed /></TreeCaret><TreeIcon $ml={17}><Wrench c="#444" /></TreeIcon>Properties</TreeRow>
            <TreeRow $pad={37}><TreeCaret><TreeClosed /></TreeCaret><TreeIcon $ml={17}><RefsIcon /></TreeIcon>References</TreeRow>
            <TreeRow $pad={37}><TreeCaret><TreeClosed /></TreeCaret><TreeIcon $ml={17}><TreeFolder /></TreeIcon>Assets</TreeRow>
            <TreeRow $pad={37}><TreeCaret><TreeClosed /></TreeCaret><TreeIcon $ml={17}>
              <FileOutline><path d="M0 17 L2 15 M0 17 L2 19 M20 17 L18 15 M20 17 L18 19" stroke="#444" strokeWidth="1" /><rect x="6" y="13" width="8" height="7" fill="#0e9ce0" /></FileOutline>
            </TreeIcon>App.xaml</TreeRow>
            <TreeRow $pad={37}><TreeCaret><TreeOpen /></TreeCaret><TreeIcon $ml={17}><FileOutline /></TreeIcon>MainPage.xaml</TreeRow>
            <TreeRow $pad={63}><TreeCaret><TreeClosed /></TreeCaret><TreeIcon $ml={17} $mr={8}>
              <FileOutline><path d="M0 4 H8 M5 1 L9 4 L5 7" fill="none" stroke="#0e70c0" strokeWidth="2" /></FileOutline>
            </TreeIcon>MainPage.xaml.cs</TreeRow>
            <TreeRow $pad={37} $hl><TreeCaret /><TreeIcon $ml={17}><ManifestIcon /></TreeIcon>Package.appxmanifest</TreeRow>
          </Tree>
          <BottomTabs>
            <BottomTab $active>Solution Explorer</BottomTab>
            <BottomTab>Git Changes</BottomTab>
          </BottomTabs>
          <PanelTitle>
            <TitleText>Properties</TitleText>
            <TitleIcons><Caret c="#99a6cc" w={11} /><Pin c="#c2cbe4" /><XMark c="#c2cbe4" s={14} w={2} /></TitleIcons>
          </PanelTitle>
          <PropCombo><Caret c="#222" w={8} /></PropCombo>
          <PropBar>
            <PropToggle><CategorizedIcon /></PropToggle>
            <Tool $w={34}><AzIcon /></Tool>
            <PropSep />
            <Tool $w={30}><Wrench c="#a6a9b2" /></Tool>
          </PropBar>
          <PropBody />
        </RightColumn>
      </Main>
      <StatusBar>
        <ReadyIcon />
        <StatusText $ml={12}>Ready</StatusText>
        <StatusEnd>
          <UpArrow />
          <StatusText $ml={16} $size={17.3}>Add to Source Control</StatusText>
          <Tool $w={28}><Caret c="#fff" w={10} dir="up" /></Tool>
          <BellWrap><Bell /><BellBadge>1</BellBadge></BellWrap>
        </StatusEnd>
      </StatusBar>
      <Taskbar>
        <TaskSlot $w={72}><WinLogo /></TaskSlot>
        <TaskSearch><TaskMagnifier />Type here to search</TaskSearch>
        <TaskSlot $w={70}><Cortana /></TaskSlot>
        <TaskSlot $w={74}><TaskView /></TaskSlot>
        <TaskSlot $w={78}><Edge /></TaskSlot>
        <TaskSlot $w={70} $run><TaskFolder /></TaskSlot>
        <TaskSlot $w={74}><TaskStore /></TaskSlot>
        <TaskSlot $w={72}><Calc /></TaskSlot>
        <TaskSlot $w={76} $run><CodeYellow /></TaskSlot>
        <TaskSlot $w={68}><MailIcon /></TaskSlot>
        <TaskSlot $w={77} $run><GreenApp /></TaskSlot>
        <TaskSlot $w={70} $run $active><VsLogo size={36} /></TaskSlot>
        <TaskSlot $w={40} $ml={38}><WeatherIcon /></TaskSlot>
        <TrayText $w={50} $ml={10}>26°C</TrayText>
        <TaskSlot $w={32} $ml={13}><TrayUp /></TaskSlot>
        <TaskSlot $w={40}><TrayCam /></TaskSlot>
        <TaskSlot $w={32}><TrayCloud /></TaskSlot>
        <TaskSlot $w={42}><TrayPower /></TaskSlot>
        <TaskSlot $w={32}><TrayWifi /></TaskSlot>
        <TaskSlot $w={36}><TrayVolume /></TaskSlot>
        <LangStack><div>ENG</div><div>TRQ</div></LangStack>
        <ClockStack><div>1:32 PM</div><div>6/10/2021</div></ClockStack>
        <TaskSlot $w={88}><NotifyIcon /><NotifyBadge>7</NotifyBadge></TaskSlot>
      </Taskbar>
      <Annotations viewBox="0 0 1920 1200">
        <g fill="none" stroke={RED} strokeLinecap="round" strokeLinejoin="round">
          <path strokeWidth="16" d="M586 160 C565 162 552 162 536 170 C510 180 480 182 464 190 C452 205 442 218 440 225 C438 238 450 245 470 252 C495 258 510 266 527 263 C545 258 558 250 576 250 C600 249 625 250 634 243 C643 232 644 218 641 208 C635 192 620 175 600 163" />
          <path strokeWidth="16" d="M1454 456 C1470 447 1482 440 1497 434 C1515 427 1530 424 1545 430 C1565 438 1580 447 1595 450 C1620 452 1655 448 1683 450 C1695 455 1710 470 1733 477 C1745 480 1755 479 1760 484 C1755 495 1740 500 1733 505 C1715 518 1700 524 1680 532 C1665 538 1655 544 1645 542 C1635 535 1632 522 1622 510 C1590 514 1565 516 1533 523 C1510 527 1495 531 1475 533 C1460 534 1445 530 1437 522 C1431 510 1430 495 1434 482 C1438 470 1445 462 1454 456" />
          <path strokeWidth="15" d="M1468 536 C1474 538 1490 536 1498 533" />
          <path strokeWidth="5.5" d="M107 567 C90 572 68 583 50 587 C36 595 26 605 27 618 C28 632 30 645 42 653 C58 658 80 672 100 680 C130 686 190 692 233 689 C245 688 262 682 277 680 C265 678 255 668 245 669 C258 668 268 676 277 680 C295 686 320 686 340 684 C360 680 382 668 388 658 C392 645 390 625 380 615 C370 605 355 600 340 595 C322 590 312 585 290 584 C265 584 240 583 227 582 C200 578 170 578 140 575 C125 572 118 566 107 567" />
        </g>
      </Annotations>
    </Page>
  );
}
